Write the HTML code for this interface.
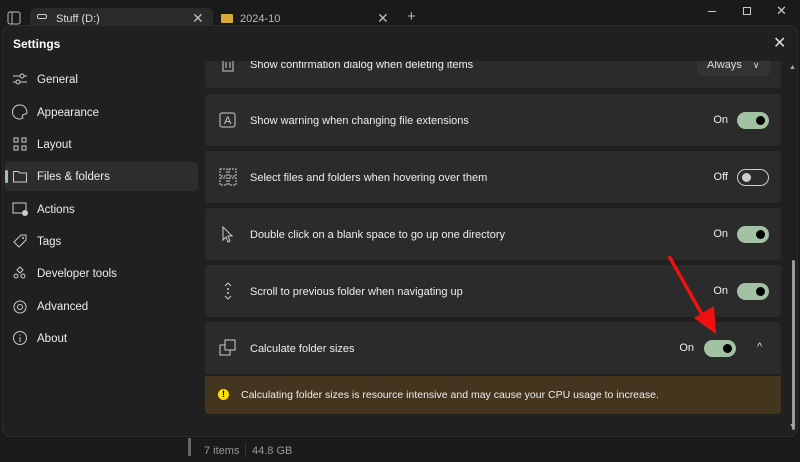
<!DOCTYPE html>
<html><head><meta charset="utf-8"><style>
*{margin:0;padding:0;box-sizing:border-box}
body{width:800px;height:462px;background:#1a1a1a;font-family:"Liberation Sans",sans-serif;color:#fff;position:relative;overflow:hidden;font-size:12px}
.a{position:absolute}
.tab{position:absolute;top:8px;height:22px;border-radius:6px 6px 0 0;font-size:11px;color:#ddd}
.dlg{position:absolute;left:2px;top:25px;width:796px;height:412px;background:#202020;border-radius:8px;border:1px solid #2c2c2c}
.nav{position:absolute;left:37px;font-size:11.5px;color:#eee;margin-top:1px}
.ni{position:absolute;left:12px;width:16px;height:16px}
.clip{position:absolute;left:205px;top:61px;width:580px;height:370px;overflow:hidden}
.card{position:absolute;left:0;width:576px;height:52px;background:#2b2b2b;border-radius:4px}
.card .t{position:absolute;left:45px;top:21px;font-size:11px;color:#eee}
.card .ic{position:absolute;left:14px;top:17px;width:18px;height:18px}
.on{position:absolute;right:53px;top:20px;font-size:11px;color:#eee}
.tg{position:absolute;right:12px;top:18px;width:32px;height:17px;border-radius:9px;background:#a3c2a3}
.tg::after{content:"";position:absolute;right:4px;top:4px;width:9px;height:9px;border-radius:50%;background:#000}
.tg.off{background:transparent;border:1px solid #ccc}
.tg.off::after{left:4px;right:auto;top:3px;background:#ccc}
</style></head><body>
<svg class="a" style="left:7px;top:11px" width="14" height="14"><rect x="1" y="1" width="12" height="12" rx="2" fill="none" stroke="#bbb"/><line x1="5" y1="1" x2="5" y2="13" stroke="#bbb"/></svg>
<div class="tab" style="left:30px;width:183px;background:#2a2a2a"><span class="a" style="left:7px;top:6px;width:10px;height:5px;border:1px solid #ccc;border-radius:2px"></span><span class="a" style="left:26px;top:5px">Stuff (D:)</span><span class="a" style="left:162px;top:2px;font-size:14px;color:#bbb">✕</span></div>
<div class="tab" style="left:215px;width:183px"><span class="a" style="left:6px;top:6px;width:12px;height:9px;background:#d8a838;border-radius:1px"></span><span class="a" style="left:25px;top:5px;color:#bbb">2024-10</span><span class="a" style="left:162px;top:2px;font-size:14px;color:#bbb">✕</span></div>
<div class="a" style="left:407px;top:8px;font-size:15px;color:#bbb">+</div>
<div class="a" style="left:708px;top:11px;width:8px;border-top:1px solid #ccc"></div>
<div class="a" style="left:743px;top:7px;width:8px;height:8px;border:1px solid #ccc"></div>
<div class="a" style="left:776px;top:3px;font-size:13px;color:#ccc">✕</div>
<div class="dlg"></div>
<div class="a" style="left:13px;top:37px;font-size:12px;font-weight:bold">Settings</div>
<div class="a" style="left:773px;top:33px;font-size:16px;color:#ddd">✕</div>
<div class="a" style="left:5px;top:162px;width:193px;height:29px;background:#2d2d2d;border-radius:4px"></div>
<div class="a" style="left:5px;top:170px;width:3px;height:13px;background:#a3c2a3;border-radius:2px"></div>
<svg class="ni" style="top:71px"><path d="M1 5h14M1 11h14" stroke="#ccc"/><circle cx="10" cy="5" r="2" fill="#202020" stroke="#ccc"/><circle cx="6" cy="11" r="2" fill="#202020" stroke="#ccc"/></svg><div class="nav" style="top:73px">General</div>
<svg class="ni" style="top:104px"><path d="M8 1a7 7 0 1 0 3 13c-2-2 0-4 3-4 2 0 1-9-6-9z" fill="none" stroke="#ccc"/></svg><div class="nav" style="top:106px">Appearance</div>
<svg class="ni" style="top:136px"><g fill="none" stroke="#ccc"><rect x="2" y="2" width="4" height="4"/><rect x="10" y="2" width="4" height="4"/><rect x="2" y="10" width="4" height="4"/><rect x="10" y="10" width="4" height="4"/></g></svg><div class="nav" style="top:138px">Layout</div>
<svg class="ni" style="top:168px"><path d="M1.5 3.5h5l1 1.5h7v9h-13z" fill="none" stroke="#ccc"/></svg><div class="nav" style="top:170px">Files &amp; folders</div>
<svg class="ni" style="top:201px"><rect x="1" y="2" width="13" height="10" fill="none" stroke="#ccc"/><circle cx="13" cy="12" r="3" fill="#ccc"/></svg><div class="nav" style="top:203px">Actions</div>
<svg class="ni" style="top:233px"><path d="M2 9l7-7h5v5l-7 7z" fill="none" stroke="#ccc"/><circle cx="11" cy="5" r="1" fill="#ccc"/></svg><div class="nav" style="top:235px">Tags</div>
<svg class="ni" style="top:265px"><g fill="none" stroke="#ccc"><path d="M8 2l3 3-3 3-3-3z"/><circle cx="4" cy="11" r="2"/><circle cx="11" cy="11" r="2"/></g></svg><div class="nav" style="top:267px">Developer tools</div>
<svg class="ni" style="top:298px"><g fill="none" stroke="#ccc"><circle cx="8" cy="9" r="6"/><circle cx="8" cy="9" r="2.5"/></g></svg><div class="nav" style="top:300px">Advanced</div>
<svg class="ni" style="top:330px"><circle cx="8" cy="8" r="6.5" fill="none" stroke="#ccc"/><path d="M8 7v5M8 4.5v1" stroke="#ccc"/></svg><div class="nav" style="top:332px">About</div>
<div class="clip">
<div class="card" style="top:-25px"><svg class="ic" style="top:20px"><path d="M4 3v12h10V3M2 3h14M7 6v6M11 6v6" fill="none" stroke="#ccc"/></svg><div class="t" style="top:23px">Show confirmation dialog when deleting items</div>
<div class="a" style="left:492px;top:14px;width:73px;height:26px;background:#333;border-radius:4px;font-size:11px;color:#ddd;padding:9px 0 0 10px">Always <span style="margin-left:8px;font-size:9px">∨</span></div></div>
<div class="card" style="top:33px"><svg class="ic"><rect x="1" y="2" width="15" height="14" rx="2" fill="none" stroke="#ccc"/><text x="5" y="13" font-size="11" fill="#ccc" font-family="Liberation Sans">A</text></svg><div class="t">Show warning when changing file extensions</div><div class="on">On</div><div class="tg"></div></div>
<div class="card" style="top:90px"><svg class="ic"><g fill="none" stroke="#ccc" stroke-dasharray="2 1"><rect x="1" y="1" width="7" height="7"/><rect x="10" y="1" width="7" height="7"/><rect x="1" y="10" width="7" height="7"/><rect x="10" y="10" width="7" height="7"/></g></svg><div class="t">Select files and folders when hovering over them</div><div class="on">Off</div><div class="tg off"></div></div>
<div class="card" style="top:147px"><svg class="ic"><path d="M4 2v13l3-3 2 5 2-1-2-5h4z" fill="none" stroke="#ccc"/></svg><div class="t">Double click on a blank space to go up one directory</div><div class="on">On</div><div class="tg"></div></div>
<div class="card" style="top:204px"><svg class="ic"><path d="M6 4l3-3 3 3M6 14l3 3 3-3" fill="none" stroke="#ccc"/><circle cx="9" cy="7" r="1" fill="#ccc"/><circle cx="9" cy="11" r="1" fill="#ccc"/></svg><div class="t">Scroll to previous folder when navigating up</div><div class="on">On</div><div class="tg"></div></div>
<div class="card" style="top:261px;height:52px;border-radius:4px 4px 0 0"><svg class="ic"><rect x="1" y="6" width="10" height="10" fill="#2b2b2b" stroke="#ccc"/><rect x="6" y="1" width="10" height="10" fill="#2b2b2b" stroke="#ccc"/></svg><div class="t">Calculate folder sizes</div><div class="on" style="right:87px">On</div><div class="tg" style="right:45px"></div><div class="a" style="left:552px;top:19px;font-size:11px;color:#ddd">^</div></div>
<div class="a" style="left:0;top:315px;width:576px;height:38px;background:#43351e;border-radius:0 0 4px 4px"><div class="a" style="left:13px;top:13px;width:11px;height:11px;border-radius:50%;background:#fce100;color:#000;font-size:9px;font-weight:bold;text-align:center;line-height:11px">!</div><div class="a" style="left:36px;top:13px;font-size:10.5px;color:#eee">Calculating folder sizes is resource intensive and may cause your CPU usage to increase.</div></div>
</div>
<div class="a" style="left:792px;top:260px;width:3px;height:170px;background:#9a9a9a;border-radius:2px"></div>
<div class="a" style="left:789px;top:64px;font-size:7px;color:#aaa">▲</div>
<div class="a" style="left:789px;top:423px;font-size:7px;color:#aaa">▼</div>
<svg class="a" style="left:0;top:0" width="800" height="462"><line x1="669" y1="256" x2="704" y2="318" stroke="#f01010" stroke-width="3.5"/><polygon points="694,318 716,334 714,306" fill="#f01010"/></svg>
<div class="a" style="left:188px;top:438px;width:3px;height:18px;background:#666"></div>
<div class="a" style="left:204px;top:445px;font-size:11px;color:#999">7 items</div>
<div class="a" style="left:245px;top:442px;width:1px;height:16px;background:#333"></div>
<div class="a" style="left:252px;top:445px;font-size:11px;color:#999">44.8 GB</div>
</body></html>
